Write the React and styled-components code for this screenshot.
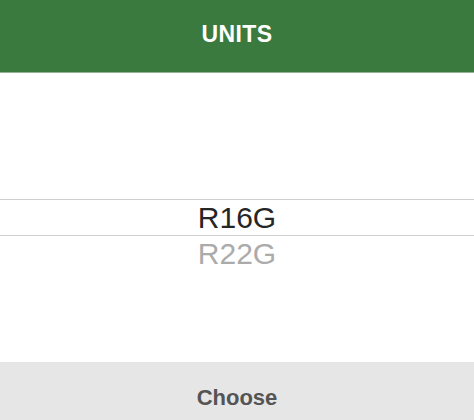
import React from 'react';
import styled, { createGlobalStyle } from 'styled-components';

// Global

const GlobalStyle = createGlobalStyle`
    html, body {
        margin: 0;
        padding: 0;
        background: #fff;
    }

    body {
        font-family: "Liberation Sans", Arial, sans-serif;
    }
`

// Styles

const Screen = styled.div`
    display: flex;
    flex-direction: column;
    width: 474px;
    height: 420px;
    overflow: hidden;
`

const Header = styled.header`
    height: 73px;
    flex-shrink: 0;
    display: flex;
    align-items: center;
    justify-content: center;
    background: #3a7a3f;
    border-bottom: 1px solid #8fb393;
    color: #fff;
    font-size: 23px;
    font-weight: 700;
    letter-spacing: 0.4px;
    padding-bottom: 3px;
    box-sizing: border-box;
`

const Picker = styled.div`
    flex: 1;
    display: grid;
    grid-template-rows: 1fr 37px 1fr;
`

const Selection = styled.div`
    display: flex;
    align-items: center;
    justify-content: center;
    border-top: 1px solid #cfcfcf;
    border-bottom: 1px solid #cfcfcf;
`

const Below = styled.div`
    display: flex;
    flex-direction: column;
    align-items: center;
`

const Option = styled.div`
    height: 36px;
    display: flex;
    align-items: center;
    justify-content: center;
    font-size: 30px;
    color: ${props => props.selected ? '#262626' : '#ababab'};
`

const Footer = styled.button`
    height: 58px;
    flex-shrink: 0;
    border: none;
    background: #e6e6e6;
    color: #545454;
    font-family: inherit;
    font-size: 22px;
    font-weight: 700;
    padding: 14px 0 0 0;
`

const App = () => {
    return (
        <>
            <GlobalStyle />
            <Screen>
                <Header>UNITS</Header>
                <Picker>
                    <div />
                    <Selection>
                        <Option selected>R16G</Option>
                    </Selection>
                    <Below>
                        <Option>R22G</Option>
                    </Below>
                </Picker>
                <Footer>Choose</Footer>
            </Screen>
        </>
    )
}

export default App;
